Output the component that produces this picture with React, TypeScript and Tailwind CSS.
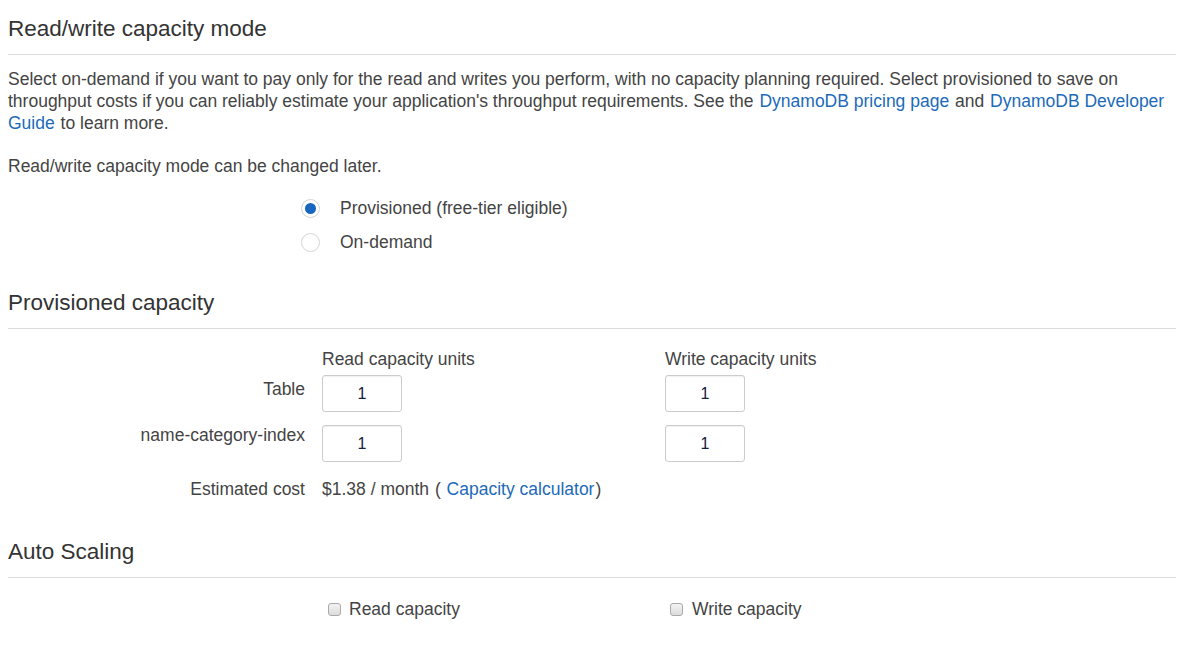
import React, { useState } from 'react';

const Heading = ({ children }: { children: React.ReactNode }) => (
  <div className="border-b border-[#dddddd] pb-[12px]">
    <h2 className="text-[22.5px] leading-[26px] text-[#333333]">{children}</h2>
  </div>
);

const NumberBox = ({ value }: { value: string }) => (
  <input
    readOnly
    value={value}
    className="w-[80px] h-[37px] border border-[#cccccc] rounded-[3px] text-center text-[16px] text-[#16213e] bg-white outline-none shadow-[inset_0_1px_1px_rgba(0,0,0,0.06)]"
  />
);

const Link = ({ children }: { children: React.ReactNode }) => (
  <a href="#" className="text-[#1c6ab8] px-[1px]">{children}</a>
);

const Checkbox = () => (
  <span className="w-[13px] h-[13px] rounded-[3px] border border-[#a9a9a9] bg-gradient-to-b from-[#f3f3f3] to-[#dcdcdc]" />
);

export default function App() {
  const [mode, setMode] = useState('provisioned');

  return (
    <div className="w-[1180px] h-[664px] overflow-hidden bg-white pl-2 pr-1 pt-[16px] font-['Liberation_Sans',Arial,sans-serif] text-[17.5px] text-[#444444]">
      {/* Read/write capacity mode */}
      <Heading>Read/write capacity mode</Heading>
      <p className="mt-[13px] leading-[22px] pr-2">
        Select on-demand if you want to pay only for the read and writes you perform, with no capacity planning required. Select provisioned to save on throughput costs if you can reliably estimate your application's throughput requirements. See the{' '}
        <Link>DynamoDB pricing page</Link> and <Link>DynamoDB Developer Guide</Link> to learn more.
      </p>
      <p className="mt-[21px] leading-[22px]">Read/write capacity mode can be changed later.</p>

      <div className="mt-[20px] ml-[293px] flex flex-col gap-[12px]">
        {[
          { id: 'provisioned', label: 'Provisioned (free-tier eligible)' },
          { id: 'ondemand', label: 'On-demand' },
        ].map((o) => (
          <label key={o.id} className="flex items-center h-[22px] cursor-pointer" onClick={() => setMode(o.id)}>
            <span className="w-[19px] h-[19px] rounded-full border border-[#d4d4d4] bg-white flex items-center justify-center">
              {mode === o.id && <span className="w-[11px] h-[11px] rounded-full bg-[#1866c0]" />}
            </span>
            <span className="ml-[20px]">{o.label}</span>
          </label>
        ))}
      </div>

      {/* Provisioned capacity */}
      <div className="mt-[37px]">
        <Heading>Provisioned capacity</Heading>
      </div>

      <div className="mt-[19px] grid grid-cols-[314px_343px_1fr] items-start">
        <div />
        <div className="leading-[22px]">Read capacity units</div>
        <div className="leading-[22px]">Write capacity units</div>

        <div className="text-right pr-[17px] mt-[8px] leading-[22px]">Table</div>
        <div className="mt-[5px]"><NumberBox value="1" /></div>
        <div className="mt-[5px]"><NumberBox value="1" /></div>

        <div className="text-right pr-[17px] mt-[12px] leading-[22px]">name-category-index</div>
        <div className="mt-[13px]"><NumberBox value="1" /></div>
        <div className="mt-[13px]"><NumberBox value="1" /></div>

        <div className="text-right pr-[17px] mt-[16px] leading-[22px]">Estimated cost</div>
        <div className="mt-[16px] leading-[22px] col-span-2 whitespace-nowrap">
          $1.38 / month <span className="ml-[1px]">(</span> <Link>Capacity calculator</Link>)
        </div>
      </div>

      {/* Auto Scaling */}
      <div className="mt-[39px]">
        <Heading>Auto Scaling</Heading>
      </div>

      <div className="mt-[20px] grid grid-cols-[320px_342px_1fr] items-center">
        <div />
        <label className="flex items-center gap-[8px] leading-[22px]">
          <Checkbox />
          Read capacity
        </label>
        <label className="flex items-center gap-[9px] leading-[22px]">
          <Checkbox />
          Write capacity
        </label>
      </div>
    </div>
  );
}
